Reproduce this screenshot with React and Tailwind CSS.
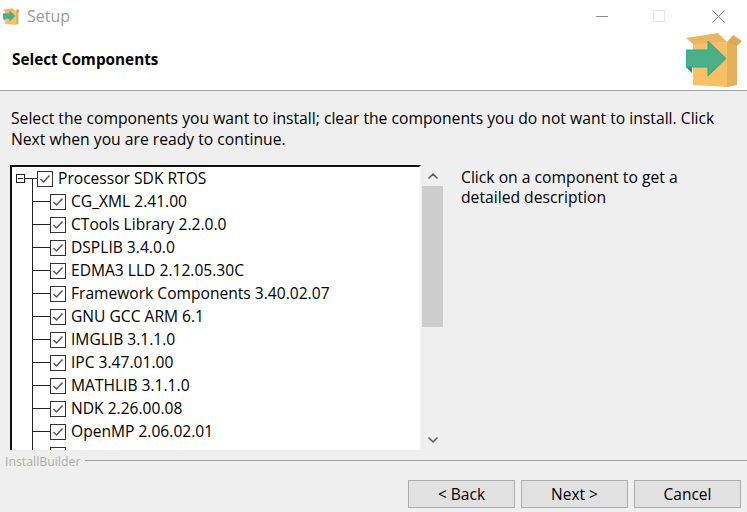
import { ChevronUp, ChevronDown } from "lucide-react";

const items = [
  "CG_XML 2.41.00",
  "CTools Library 2.2.0.0",
  "DSPLIB 3.4.0.0",
  "EDMA3 LLD 2.12.05.30C",
  "Framework Components 3.40.02.07",
  "GNU GCC ARM 6.1",
  "IMGLIB 3.1.1.0",
  "IPC 3.47.01.00",
  "MATHLIB 3.1.1.0",
  "NDK 2.26.00.08",
  "OpenMP 2.06.02.01",
  "",
];

function BoxIcon({ className }) {
  return (
    <svg viewBox="686 32 56 56" className={className}>
      <path d="M693 43L727 42V87L693 85Z" fill="#f7bf66" />
      <path d="M727 42L737 44V85L727 87Z" fill="#e5b05c" />
      <path d="M686 38L718 33L727 42L693 44Z" fill="#ebb661" />
      <path d="M727 42L733 35L742 41L737 46Z" fill="#dfa957" />
      <path d="M686 67L692 73V67Z" fill="#2f8a6a" />
      <path d="M686 50H708V41L726 58.500L708 76V67H686Z" fill="#4bb088" stroke="#1fae8f" strokeWidth="1" />
    </svg>
  );
}

function Check() {
  return (
    <span className="flex h-[16px] w-[16px] shrink-0 items-center justify-center border border-[#333333] bg-white">
      <svg viewBox="0 0 14 14" className="h-[14px] w-[14px]">
        <path d="M2.500 7L5.500 10L11.500 3.500" fill="none" stroke="#555555" strokeWidth="1.500" />
      </svg>
    </span>
  );
}

function Btn({ children }) {
  return (
    <button className="h-[28px] w-[107px] border border-[#adadad] bg-[#e1e1e1] pt-px text-[15.500px] leading-none text-black">
      {children}
    </button>
  );
}

export default function App() {
  return (
    <div className="flex h-[512px] w-[747px] flex-col overflow-hidden bg-[#efefef] font-['Open_Sans',sans-serif] text-[15.700px] text-black">
      <header className="h-[91px] shrink-0 border-b border-[#a0a0a0] bg-white">
        <div className="flex h-[32px] items-center">
          <BoxIcon className="ml-[3px] h-[17px] w-[17px]" />
          <span className="ml-[7px] w-[43px] text-[16px] text-[#9b9b9b]">Setup</span>
          <div className="ml-[526px] h-px w-[12px] bg-[#8a8a8a]" />
          <div className="ml-[45px] h-[12px] w-[12px] border border-[#e4e4e4]" />
          <svg viewBox="0 0 13 13" className="ml-[47px] h-[13px] w-[13px]">
            <path d="M0.500 0.500L12.500 12.500M12.500 0.500L0.500 12.500" stroke="#777777" strokeWidth="1" />
          </svg>
        </div>
        <div className="flex items-start justify-between pr-[5px]">
          <h1 className="ml-[12px] mt-[16px] text-[15.300px] font-bold">Select Components</h1>
          <BoxIcon className="h-[56px] w-[56px]" />
        </div>
      </header>

      <p className="ml-[11px] mt-[17px] w-[725px] leading-[21px]">
        Select the components you want to install; clear the components you do not want to install. Click Next when you are ready to continue.
      </p>

      <div className="mt-[15px] flex h-[285px] shrink-0">
        <div className="relative ml-[10px] h-full w-[411px] overflow-hidden border-l-2 border-r-2 border-t-2 border-l-[#111111] border-r-[#f8f8f8] border-t-[#111111] bg-white text-[15.600px]">
          <div className="absolute left-[20px] top-[12px] h-[280px] w-px bg-[#222222]" />
          <div className="flex h-[23px] items-center">
            <span className="ml-[4px] flex h-[9px] w-[9px] items-center justify-center border border-[#222222]">
              <span className="h-px w-[5px] bg-[#222222]" />
            </span>
            <span className="h-px w-[12px] bg-[#222222]" />
            <Check />
            <span className="ml-[5px]">Processor SDK RTOS</span>
          </div>
          {items.map((name, i) => (
            <div key={i} className="flex h-[23px] items-center pl-[20px]">
              <span className="h-px w-[18px] bg-[#222222]" />
              <Check />
              <span className="ml-[5px]">{name}</span>
            </div>
          ))}
        </div>
        <div className="ml-px flex h-full w-[21px] flex-col items-center">
          <div className="flex h-[21px] w-full items-center justify-center">
            <ChevronUp className="h-[16px] w-[16px] text-[#606060]" strokeWidth={2.500} />
          </div>
          <div className="h-[141px] w-full bg-[#cdcdcd]" />
          <div className="flex-1" />
          <div className="flex h-[20px] w-full items-center justify-center">
            <ChevronDown className="h-[16px] w-[16px] text-[#606060]" strokeWidth={2.500} />
          </div>
        </div>
        <p className="ml-[18px] mt-[2px] w-[270px] leading-[20px]">Click on a component to get a detailed description</p>
      </div>

      <div className="flex h-[20px] items-center">
        <span className="ml-[5px] mt-[3px] text-[12.300px] leading-[20px] text-[#adadad]">InstallBuilder</span>
        <div className="ml-[5px] h-px flex-1 bg-[#a0a0a0]" />
      </div>

      <div className="mt-[10px] flex justify-end gap-[6px] pr-[6px]">
        <Btn>&lt; Back</Btn>
        <Btn>Next &gt;</Btn>
        <Btn>Cancel</Btn>
      </div>
    </div>
  );
}
